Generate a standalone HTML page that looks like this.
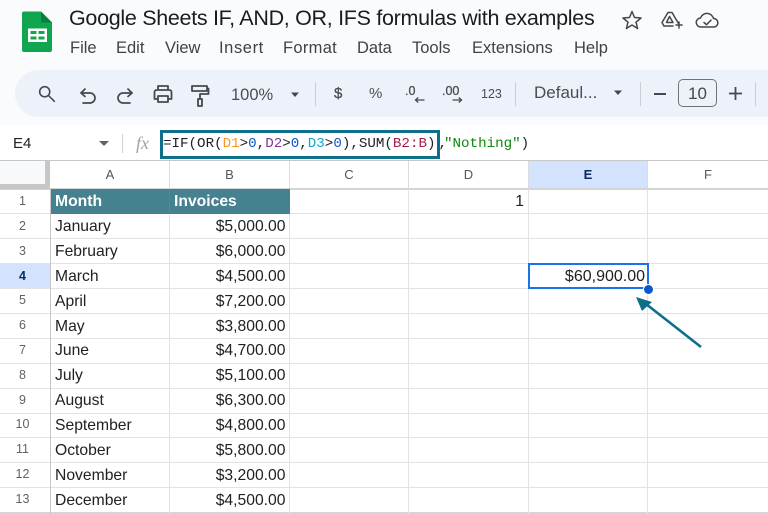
<!DOCTYPE html>
<html><head><meta charset="utf-8"><style>
html,body{margin:0;padding:0}
body{width:768px;height:514px;position:relative;overflow:hidden;background:#fff;font-family:"Liberation Sans",sans-serif}
.a{position:absolute;white-space:nowrap}
.m{top:37px;font-size:16.5px;color:#3f4347;line-height:22px}
.h{top:160px;height:28px;line-height:30px;text-align:center;font-size:13px;color:#555}
.rn{left:0;width:45px;text-align:center;font-size:12.5px;color:#5f6368;line-height:25px;height:25px}
.c{font-size:15.7px;color:#202124;line-height:25px;height:25px;margin-top:1px}
.l{left:55px}
.r{left:170px;width:115.5px;text-align:right}
.v{background:#e1e3e4;width:1px;top:189px;height:325px}
.hl{background:#e1e3e4;height:1px;left:0;width:768px}
.tb{color:#4a4d51}
</style></head><body>
<div class="a" style="left:0;top:0;width:768px;height:125px;background:#f9fbfd"></div>
<div class="a" style="left:15px;top:70px;width:780px;height:47px;border-radius:24px;background:#edf2fa"></div>

<svg class="a" style="left:21px;top:11px" width="32" height="42" viewBox="0 0 32 42">
<path d="M3 0.500H20L31 11.500V39a2 2 0 0 1-2 2H3a2 2 0 0 1-2-2V2.500a2 2 0 0 1 2-2z" fill="#0fa64f"/>
<path d="M20 .5V11.500H31z" fill="#0a7f3d"/>
<path d="M7 17.500H26V31H7z" fill="#fff"/>
<path d="M9.500 20H15.500V23H9.500zM17.500 20H23.500V23H17.500zM9.500 25.500H15.500V28.500H9.500zM17.500 25.500H23.500V28.500H17.500z" fill="#0fa64f"/>
</svg>

<div class="a" style="left:69px;top:4px;font-size:21.500px;letter-spacing:-.3px;line-height:28px;color:#1b1c1e">Google Sheets IF, AND, OR, IFS formulas with examples</div>
<span class="a m" style="left:70px">File</span>
<span class="a m" style="left:116px">Edit</span>
<span class="a m" style="left:165px">View</span>
<span class="a m" style="left:219px;letter-spacing:.6px">Insert</span>
<span class="a m" style="left:283px;letter-spacing:.3px">Format</span>
<span class="a m" style="left:357px">Data</span>
<span class="a m" style="left:412px">Tools</span>
<span class="a m" style="left:472px">Extensions</span>
<span class="a m" style="left:574px">Help</span>

<svg class="a" style="left:620px;top:8px" width="130" height="24" viewBox="0 0 130 24" fill="none" stroke="#44474a" stroke-width="1.500" stroke-linejoin="round" stroke-linecap="round">
<path d="M12 3.500l2.500 6 6.500.5-5 4.200 1.600 6.300L12 17l-5.600 3.500L8 14.200 3 10l6.500-.5z"/>
<path d="M44 18l-2-3.500L48 4.500h4l6.500 11"/><path d="M44 18h9M46.500 14.500h6.500L49.500 8.500z"/><path d="M59 14v6M56 17h6"/>
<path d="M81 19a4.500 4.500 0 0 1-.5-9 6.800 6.800 0 0 1 13 .5 4.300 4.300 0 0 1 1 8.500z"/><path d="M84 14.500l2.500 2.200 4.500-4.500"/>
</svg>

<svg class="a" style="left:36px;top:83px" width="22" height="22" viewBox="0 0 24 24" fill="none" stroke="#45484c" stroke-width="1.700" stroke-linecap="round">
<circle cx="9.500" cy="9.500" r="5.500"/><path d="M13.500 13.500L20 20"/>
</svg>
<svg class="a" style="left:76px;top:84px" width="24" height="24" viewBox="0 0 24 24" fill="none" stroke="#45484c" stroke-width="1.700" stroke-linecap="round" stroke-linejoin="round">
<path d="M9 5L5 9l4 3.500"/><path d="M5 9h9a4.500 4.500 0 0 1 0 10H7"/>
</svg>
<svg class="a" style="left:113px;top:84px" width="24" height="24" viewBox="0 0 24 24" fill="none" stroke="#45484c" stroke-width="1.700" stroke-linecap="round" stroke-linejoin="round">
<path d="M15 5l4 4-4 3.500"/><path d="M19 9h-9a4.500 4.500 0 0 0 0 10h7"/>
</svg>
<svg class="a" style="left:151px;top:82px" width="24" height="24" viewBox="0 0 24 24" fill="none" stroke="#45484c" stroke-width="1.800" stroke-linejoin="round">
<path d="M7 8V4h10v4"/><path d="M7 17H3.500v-7a2 2 0 0 1 2-2h13a2 2 0 0 1 2 2v7H17"/><path d="M7 14h10v6H7z"/>
</svg>
<svg class="a" style="left:188px;top:82px" width="24" height="26" viewBox="0 0 24 26" fill="none" stroke="#45484c" stroke-width="1.800" stroke-linejoin="round">
<path d="M4 4h15v5H4z"/><path d="M19 6.500h1.500V12H12v5"/><path d="M10 17h4v7h-4z"/>
</svg>
<span class="a tb" style="left:231px;top:83px;font-size:16.500px;line-height:24px">100%</span>
<svg class="a" style="left:290px;top:92px" width="10" height="6"><path d="M1 .5h8L5 5z" fill="#45484c"/></svg>
<div class="a" style="left:315px;top:82px;width:1px;height:24px;background:#c9ccd1"></div>
<span class="a tb" style="left:334px;top:83px;font-size:15px;line-height:21px;-webkit-text-stroke:.3px #4a4d51">$</span>
<span class="a tb" style="left:369px;top:83px;font-size:15px;line-height:21px">%</span>
<span class="a tb" style="left:405px;top:83px;font-size:12.500px;line-height:16px;letter-spacing:0;-webkit-text-stroke:.3px #4a4d51">.0</span>
<svg class="a" style="left:414px;top:96px" width="11" height="8" fill="none" stroke="#45484c" stroke-width="1.300"><path d="M10.500 4H1.500M4.200 1.500L1.500 4l2.700 2.500"/></svg>
<span class="a tb" style="left:442px;top:83px;font-size:12.500px;line-height:16px;letter-spacing:0;-webkit-text-stroke:.3px #4a4d51">.00</span>
<svg class="a" style="left:452px;top:96px" width="11" height="8" fill="none" stroke="#45484c" stroke-width="1.300"><path d="M.5 4h9M6.800 1.500L9.500 4 6.800 6.500"/></svg>
<span class="a tb" style="left:481px;top:84px;font-size:12.500px;line-height:20px">123</span>
<div class="a" style="left:515px;top:82px;width:1px;height:24px;background:#c9ccd1"></div>
<span class="a tb" style="left:534px;top:82px;font-size:17px;line-height:22px">Defaul...</span>
<svg class="a" style="left:613px;top:90px" width="10" height="6"><path d="M1 .5h8L5 5z" fill="#45484c"/></svg>
<div class="a" style="left:640px;top:82px;width:1px;height:24px;background:#c9ccd1"></div>
<div class="a" style="left:654px;top:93px;width:12px;height:2px;background:#45484c"></div>
<div class="a" style="left:678px;top:79px;width:37px;height:26px;border:1px solid #6f7378;border-radius:5px;text-align:center;font-size:17px;line-height:27px;color:#45484c">10</div>
<svg class="a" style="left:729px;top:87px" width="13" height="13"><path d="M0 6.500h13M6.500 0v13" stroke="#45484c" stroke-width="1.800"/></svg>
<div class="a" style="left:755px;top:82px;width:1px;height:24px;background:#c9ccd1"></div>

<span class="a" style="left:13px;top:135px;font-size:15px;line-height:18px;color:#202124">E4</span>
<svg class="a" style="left:98px;top:140px" width="12" height="7"><path d="M1 1h10L6 6z" fill="#5f6368"/></svg>
<div class="a" style="left:122px;top:134px;width:1px;height:19px;background:#d0d3d6"></div>
<span class="a" style="left:136px;top:132px;font-family:'Liberation Serif',serif;font-style:italic;font-size:18px;line-height:22px;color:#a0a3a6">fx</span>
<div class="a" style="left:160px;top:130px;width:274px;height:23px;border:3px solid #0e6f8a"></div>
<div class="a" style="left:163px;top:135px;font-family:'Liberation Mono',monospace;font-size:14.200px;line-height:18px;color:#202124">=IF(OR(<span style="color:#f7981d">D1</span>&gt;<span style="color:#1155cc">0</span>,<span style="color:#7e3794">D2</span>&gt;<span style="color:#1155cc">0</span>,<span style="color:#11a9cc">D3</span>&gt;<span style="color:#1155cc">0</span>),SUM(<span style="color:#a61d4c">B2:B</span>)<span style="margin-left:3px;margin-right:-3px">,</span><span style="color:#0a8a0a">"Nothing"</span>)</div>

<!-- headers -->
<div class="a" style="left:0;top:160px;width:768px;height:29px;background:#fff"></div>
<div class="a" style="left:0;top:160px;width:45px;height:24px;background:#f8f9fa"></div>
<div class="a" style="left:528px;top:161px;width:119px;height:27px;background:#d3e3fd"></div>
<div class="a" style="left:0;top:160px;width:768px;height:1px;background:#c7c7c7"></div>
<div class="a" style="left:0;top:188px;width:768px;height:1.500px;background:#d3d4d6"></div>
<div class="a" style="left:0;top:184px;width:50px;height:5px;background:#c7c7c7"></div>
<div class="a" style="left:45px;top:160px;width:5px;height:29px;background:#c7c7c7"></div>
<div class="a h" style="left:51px;width:118px">A</div>
<div class="a h" style="left:170px;width:119px">B</div>
<div class="a h" style="left:290px;width:118px">C</div>
<div class="a h" style="left:409px;width:119px">D</div>
<div class="a h" style="left:529px;width:118px;color:#0b2a5e;font-weight:bold">E</div>
<div class="a h" style="left:648px;width:120px">F</div>
<div class="a" style="left:169px;top:161px;width:1px;height:27px;background:#dadce0"></div>
<div class="a" style="left:289px;top:161px;width:1px;height:27px;background:#dadce0"></div>
<div class="a" style="left:408px;top:161px;width:1px;height:27px;background:#dadce0"></div>
<div class="a" style="left:528px;top:161px;width:1px;height:27px;background:#dadce0"></div>
<div class="a" style="left:647px;top:161px;width:1px;height:27px;background:#dadce0"></div>

<!-- grid lines -->
<div class="a hl" style="top:213px"></div><div class="a hl" style="top:238px"></div><div class="a hl" style="top:263px"></div><div class="a hl" style="top:288px"></div><div class="a hl" style="top:313px"></div><div class="a hl" style="top:338px"></div><div class="a hl" style="top:363px"></div><div class="a hl" style="top:388px"></div><div class="a hl" style="top:413px"></div><div class="a hl" style="top:437px"></div><div class="a hl" style="top:462px"></div><div class="a hl" style="top:487px"></div>
<div class="a hl" style="top:512px;height:2px;background:#d5d6d8"></div>
<div class="a v" style="left:50px;background:#c7c7c7"></div><div class="a v" style="left:169px"></div><div class="a v" style="left:289px"></div><div class="a v" style="left:408px"></div><div class="a v" style="left:528px"></div><div class="a v" style="left:647px"></div>

<!-- header row -->
<div class="a" style="left:51px;top:189px;width:239px;height:25px;background:#45818e"></div>
<div class="a" style="left:169px;top:189px;width:1px;height:25px;background:#4f8a96"></div>
<div class="a c" style="left:55px;top:188px;color:#fff;font-weight:bold">Month</div>
<div class="a c" style="left:174px;top:188px;color:#fff;font-weight:bold">Invoices</div>

<div class="a rn" style="top:189px">1</div><div class="a rn" style="top:214px">2</div><div class="a rn" style="top:239px">3</div>
<div class="a" style="left:0;top:264px;width:50px;height:24px;background:#d3e3fd"></div>
<div class="a rn" style="top:264px;color:#0b2a5e;font-weight:bold">4</div>
<div class="a rn" style="top:288px">5</div><div class="a rn" style="top:313px">6</div><div class="a rn" style="top:338px">7</div><div class="a rn" style="top:363px">8</div><div class="a rn" style="top:388px">9</div><div class="a rn" style="top:412px">10</div><div class="a rn" style="top:437px">11</div><div class="a rn" style="top:462px">12</div><div class="a rn" style="top:487px">13</div>

<div class="a c l" style="top:213px">January</div><div class="a c r" style="top:213px">$5,000.00</div>
<div class="a c l" style="top:238px">February</div><div class="a c r" style="top:238px">$6,000.00</div>
<div class="a c l" style="top:263px">March</div><div class="a c r" style="top:263px">$4,500.00</div>
<div class="a c l" style="top:288px">April</div><div class="a c r" style="top:288px">$7,200.00</div>
<div class="a c l" style="top:313px">May</div><div class="a c r" style="top:313px">$3,800.00</div>
<div class="a c l" style="top:337px">June</div><div class="a c r" style="top:337px">$4,700.00</div>
<div class="a c l" style="top:362px">July</div><div class="a c r" style="top:362px">$5,100.00</div>
<div class="a c l" style="top:387px">August</div><div class="a c r" style="top:387px">$6,300.00</div>
<div class="a c l" style="top:412px">September</div><div class="a c r" style="top:412px">$4,800.00</div>
<div class="a c l" style="top:437px">October</div><div class="a c r" style="top:437px">$5,800.00</div>
<div class="a c l" style="top:462px">November</div><div class="a c r" style="top:462px">$3,200.00</div>
<div class="a c l" style="top:487px">December</div><div class="a c r" style="top:487px">$4,500.00</div>

<div class="a c" style="left:409px;top:188px;width:115px;text-align:right">1</div>

<!-- selected cell -->
<div class="a" style="left:528px;top:263px;width:117px;height:22px;border:2px solid #1a73e8"></div>
<div class="a c" style="left:529px;top:263px;width:116px;text-align:right;font-size:16px">$60,900.00</div>
<div class="a" style="left:643px;top:284px;width:9px;height:9px;border-radius:50%;background:#0b57d0;border:1px solid #fff"></div>

<svg class="a" style="left:625px;top:290px" width="85" height="65" viewBox="0 0 85 65">
<path d="M76 57L21 14" stroke="#0e6f8a" stroke-width="2.600"/>
<path d="M11 7L27 12 17 21z" fill="#0e6f8a"/>
</svg>
</body></html>
